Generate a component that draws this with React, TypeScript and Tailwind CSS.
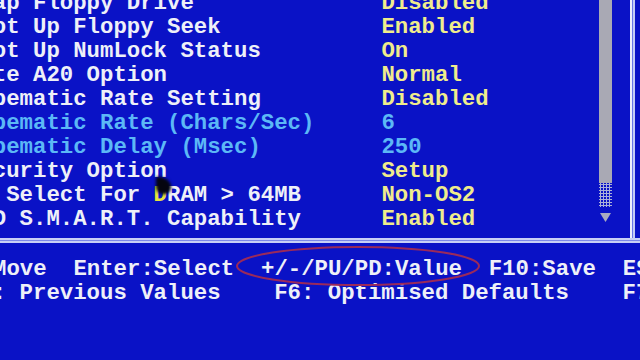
import React from "react";

type Row = { label: React.ReactNode; value: string; tone: "white" | "cyan" };

const rows: Row[] = [
  { label: "Swap Floppy Drive", value: "Disabled", tone: "white" },
  { label: "Boot Up Floppy Seek", value: "Enabled", tone: "white" },
  { label: "Boot Up NumLock Status", value: "On", tone: "white" },
  { label: "Gate A20 Option", value: "Normal", tone: "white" },
  { label: "Typematic Rate Setting", value: "Disabled", tone: "white" },
  { label: "Typematic Rate (Chars/Sec)", value: "6", tone: "cyan" },
  { label: "Typematic Delay (Msec)", value: "250", tone: "cyan" },
  { label: "Security Option", value: "Setup", tone: "white" },
  {
    label: (
      <>
        OS Select For <span className="text-[#e8e43c]">D</span>RAM &gt; 64MB
      </>
    ),
    value: "Non-OS2",
    tone: "white",
  },
  { label: "HDD S.M.A.R.T. Capability", value: "Enabled", tone: "white" },
];

export default function App() {
  return (
    <div className="w-[640px] h-[360px] overflow-hidden relative bg-[#0a12c6] font-['Liberation_Mono','DejaVu_Sans_Mono',monospace] font-bold text-[22.33px] leading-[24px] text-[#eef0f8]">
      {/* upper area */}
      <div className="flex h-[238px]">
        <div className="flex-1 overflow-hidden">
          <div className="ml-[-34px] mt-[-9px] flex flex-col">
            {rows.map((r, i) => (
              <div key={i} className="flex h-[24px] whitespace-pre">
                <div
                  className={
                    "w-[415.4px] shrink-0 " +
                    (r.tone === "cyan" ? "text-[#5cb8f6]" : "text-[#eef0f8]")
                  }
                >
                  {r.label}
                </div>
                <div className={r.tone === "cyan" ? "text-[#5cb8f6]" : "text-[#f0ec8c]"}>
                  {r.value}
                </div>
              </div>
            ))}
          </div>
        </div>

        {/* scrollbar */}
        <div className="w-[13px] mr-[18px] flex flex-col">
          <div className="h-[183px] bg-[#a9a9b4]" />
          <div className="h-[24px] bg-[radial-gradient(circle,#aab0d8_1px,transparent_1.3px)] bg-[length:3px_3px]" />
          <div className="h-[6px]" />
          <svg width="13" height="9" viewBox="0 0 13 9" className="block">
            <polygon points="1,0 12,0 6.5,9" fill="#a9aac0" />
          </svg>
        </div>

        {/* vertical double line */}
        <div className="flex w-[5px] mr-[5px]">
          <div className="w-[2px] bg-[#eef0fe]" />
          <div className="w-[1px] bg-[#6a78e6]" />
          <div className="w-[2px] bg-[#c4ccf6]" />
        </div>
      </div>

      {/* horizontal double line */}
      <div className="flex flex-col">
        <div className="h-[2px] bg-[#c8d0f6]" />
        <div className="h-[1px] bg-[#7c88e8]" />
        <div className="h-[2px] bg-[#c8d0f6]" />
      </div>

      {/* footer */}
      <div className="pt-[14px] flex flex-col whitespace-pre">
        <div className="ml-[-74px] h-[24px]">
          {"↑↓→←:Move  Enter:Select  +/-/PU/PD:Value  F10:Save  ESC:Exit  F1:General Help"}
        </div>
        <div className="ml-[-34px] h-[24px]">
          {"F5: Previous Values    F6: Optimised Defaults    F7: Fail-Safe Defaults"}
        </div>
      </div>

      {/* red ellipse annotation */}
      <svg
        className="absolute left-[234px] top-[245px] pointer-events-none"
        width="248"
        height="42"
        viewBox="0 0 248 42"
      >
        <ellipse cx="124" cy="21" rx="121" ry="19" fill="none" stroke="#9a2a5a" strokeWidth="2" />
      </svg>

      {/* mouse cursor */}
      <svg
        className="absolute left-[153px] top-[175px] pointer-events-none blur-[1.5px]"
        width="22"
        height="22"
        viewBox="0 0 22 22"
      >
        <path d="M3 2 C11 1 18 6 18 12 C18 17 14 20 9 19 C5 18 3 15 3 11 Z" fill="#050510" />
      </svg>
    </div>
  );
}
